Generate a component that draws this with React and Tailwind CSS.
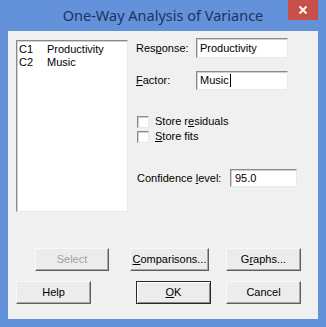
import React from 'react';

const sunken = 'bg-white border border-t-[#8a8a8a] border-l-[#8a8a8a] border-b-[#e8e8e8] border-r-[#e8e8e8] shadow-[inset_1px_1px_0_#d0d0d0]';

const Btn = ({ children, w, disabled, isDefault }) => (
  <div
    className={
      'h-[23px] flex items-center justify-center bg-[#ececec] ' +
      w +
      (isDefault
        ? ' border border-[#2a2a2a] shadow-[inset_1px_1px_0_#ffffff,inset_-1px_-1px_0_#8a8a8a]'
        : ' border border-t-[#f8f8f8] border-l-[#f8f8f8] border-b-[#5e5e5e] border-r-[#5e5e5e] shadow-[inset_-1px_-1px_0_#a8a8a8]') +
      (disabled ? ' text-[#a3a3a3]' : ' text-black')
    }
  >
    {children}
  </div>
);

const Check = ({ children }) => (
  <div className="flex items-center h-[15px]">
    <div className={'w-[12px] h-[12px] ' + sunken} />
    <span className="ml-[6px]">{children}</span>
  </div>
);

export default function App() {
  return (
    <div className="w-[326px] h-[327px] bg-[#6391da] flex flex-col font-['Liberation_Sans',Arial,sans-serif] text-[11px] leading-[13px] text-black overflow-hidden">
      {/* title bar */}
      <div className="relative h-[31px] flex items-center justify-center">
        <span className="font-['Noto_Sans',sans-serif] text-[14.5px] text-[#1d3360] pb-[1px]">One-Way Analysis of Variance</span>
        <div className="absolute right-[8px] top-0 w-[30px] h-[20px] bg-[#c94f4a] flex items-center justify-center">
          <svg width="10" height="10" viewBox="0 0 10 10">
            <path d="M1.5 1.5 L8.5 8.5 M8.5 1.5 L1.5 8.5" stroke="#ffffff" strokeWidth="1.8" />
          </svg>
        </div>
      </div>

      {/* client */}
      <div className="mx-[8px] w-[310px] h-[288px] bg-[#f0f0f0] flex flex-col">
        <div className="flex pt-[7px] pl-[8px]">
          {/* listbox */}
          <div className={'mt-[2px] w-[112px] h-[172px] pl-[2px] pt-[2px] ' + sunken}>
            <div className="flex"><span className="w-[28px]">C1</span><span>Productivity</span></div>
            <div className="flex"><span className="w-[28px]">C2</span><span>Music</span></div>
          </div>

          {/* right panel */}
          <div className="ml-[8px] flex flex-col">
            <div className="flex items-center h-[20px]">
              <span className="w-[60px]">Res<span className="underline">p</span>onse:</span>
              <div className={'w-[92px] h-[20px] flex items-center pl-[3px] ' + sunken}>Productivity</div>
            </div>
            <div className="flex items-center h-[19px] mt-[13px]">
              <span className="w-[60px]"><span className="underline">F</span>actor:</span>
              <div className={'w-[92px] h-[19px] flex items-center pl-[3px] ' + sunken}>
                Music<span className="inline-block w-[1px] h-[13px] bg-black ml-[1px]" />
              </div>
            </div>
            <div className="mt-[24px] pl-[1px] flex flex-col">
              <Check>Store r<span className="underline">e</span>siduals</Check>
              <Check><span className="underline">S</span>tore fits</Check>
            </div>
            <div className="flex items-center mt-[25px] pl-[1px] h-[18px]">
              <span className="w-[93px]">Confidence <span className="underline">l</span>evel:</span>
              <div className={'w-[67px] h-[18px] flex items-center pl-[4px] ' + sunken}>95.0</div>
            </div>
          </div>
        </div>

        {/* buttons */}
        <div className="flex mt-[36px] pl-[27px]">
          <Btn w="w-[74px]" disabled>Select</Btn>
          <div className="ml-[21px]">
            <Btn w="w-[79px]"><span><span className="underline">C</span>omparisons...</span></Btn>
          </div>
          <div className="ml-[17px]">
            <Btn w="w-[75px]"><span>G<span className="underline">r</span>aphs...</span></Btn>
          </div>
        </div>
        <div className="flex mt-[10px] pl-[8px]">
          <Btn w="w-[75px]">Help</Btn>
          <div className="ml-[45px]">
            <Btn w="w-[75px]" isDefault><span><span className="underline">O</span>K</span></Btn>
          </div>
          <div className="ml-[15px]">
            <Btn w="w-[75px]">Cancel</Btn>
          </div>
        </div>
      </div>
    </div>
  );
}
